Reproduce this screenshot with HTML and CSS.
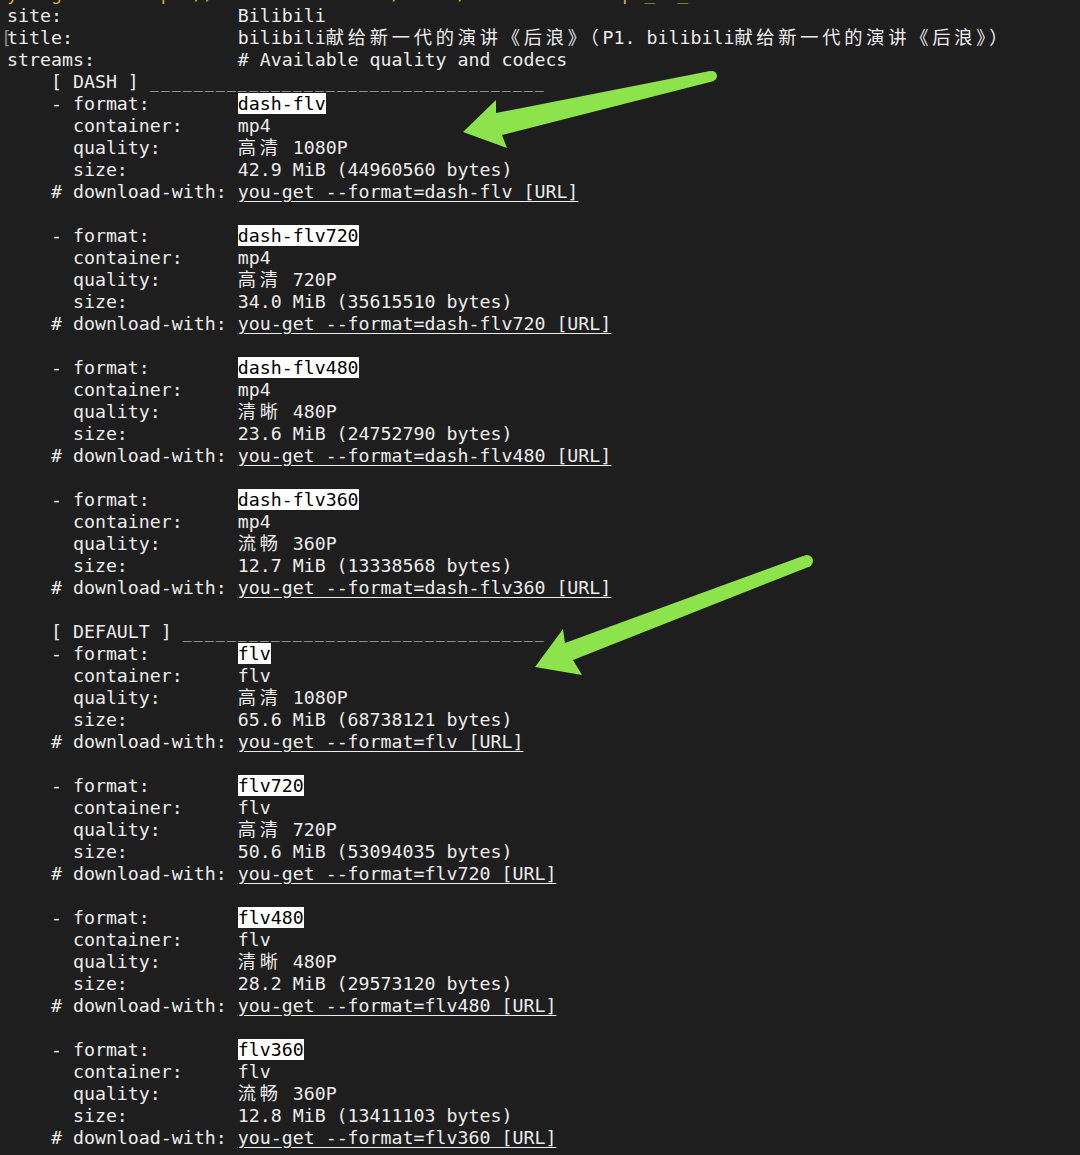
FILE: index.html
```html
<!DOCTYPE html>
<html lang="zh">
<head>
<meta charset="utf-8">
<title>you-get -i</title>
<link rel="stylesheet" href="styles.css">
</head>
<body>
<div class="term">
<div class="ln cmd">you-get -i https://www.bilibili.com/video/BV1FV411d7u7?spm_id_from=333.999.0.0</div>
<div class="ln">site:                Bilibili</div>
<div class="ln"><span class="mark">[</span>title:               bilibili<span class="w">献给新一代的演讲《后浪》（</span>P1. bilibili<span class="w">献给新一代的演讲《后浪》）</span></div>
<div class="ln">streams:             # Available quality and codecs</div>
<div class="ln">    [ DASH ] <span class="us">____________________________________</span></div>
<div class="ln">    - format:        <span class="hl">dash-flv</span></div>
<div class="ln">      container:     mp4</div>
<div class="ln">      quality:       <span class="w">高清</span> 1080P</div>
<div class="ln">      size:          42.9 MiB (44960560 bytes)</div>
<div class="ln">    # download-with: <span class="u">you-get --format=dash-flv [URL]</span></div>
<div class="ln"> </div>
<div class="ln">    - format:        <span class="hl">dash-flv720</span></div>
<div class="ln">      container:     mp4</div>
<div class="ln">      quality:       <span class="w">高清</span> 720P</div>
<div class="ln">      size:          34.0 MiB (35615510 bytes)</div>
<div class="ln">    # download-with: <span class="u">you-get --format=dash-flv720 [URL]</span></div>
<div class="ln"> </div>
<div class="ln">    - format:        <span class="hl">dash-flv480</span></div>
<div class="ln">      container:     mp4</div>
<div class="ln">      quality:       <span class="w">清晰</span> 480P</div>
<div class="ln">      size:          23.6 MiB (24752790 bytes)</div>
<div class="ln">    # download-with: <span class="u">you-get --format=dash-flv480 [URL]</span></div>
<div class="ln"> </div>
<div class="ln">    - format:        <span class="hl">dash-flv360</span></div>
<div class="ln">      container:     mp4</div>
<div class="ln">      quality:       <span class="w">流畅</span> 360P</div>
<div class="ln">      size:          12.7 MiB (13338568 bytes)</div>
<div class="ln">    # download-with: <span class="u">you-get --format=dash-flv360 [URL]</span></div>
<div class="ln"> </div>
<div class="ln">    [ DEFAULT ] <span class="us">_________________________________</span></div>
<div class="ln">    - format:        <span class="hl">flv</span></div>
<div class="ln">      container:     flv</div>
<div class="ln">      quality:       <span class="w">高清</span> 1080P</div>
<div class="ln">      size:          65.6 MiB (68738121 bytes)</div>
<div class="ln">    # download-with: <span class="u">you-get --format=flv [URL]</span></div>
<div class="ln"> </div>
<div class="ln">    - format:        <span class="hl">flv720</span></div>
<div class="ln">      container:     flv</div>
<div class="ln">      quality:       <span class="w">高清</span> 720P</div>
<div class="ln">      size:          50.6 MiB (53094035 bytes)</div>
<div class="ln">    # download-with: <span class="u">you-get --format=flv720 [URL]</span></div>
<div class="ln"> </div>
<div class="ln">    - format:        <span class="hl">flv480</span></div>
<div class="ln">      container:     flv</div>
<div class="ln">      quality:       <span class="w">清晰</span> 480P</div>
<div class="ln">      size:          28.2 MiB (29573120 bytes)</div>
<div class="ln">    # download-with: <span class="u">you-get --format=flv480 [URL]</span></div>
<div class="ln"> </div>
<div class="ln">    - format:        <span class="hl">flv360</span></div>
<div class="ln">      container:     flv</div>
<div class="ln">      quality:       <span class="w">流畅</span> 360P</div>
<div class="ln">      size:          12.8 MiB (13411103 bytes)</div>
<div class="ln">    # download-with: <span class="u">you-get --format=flv360 [URL]</span></div>
</div>
<svg class="arrows" width="1080" height="1155" viewBox="0 0 1080 1155" xmlns="http://www.w3.org/2000/svg">
  <g fill="#8de34b">
    <polygon points="710,71 496,113 496,100 463,132 507,148 502,135 714,81"/>
    <circle cx="712" cy="76" r="5"/>
    <polygon points="803,556 565,643 563,629 535,667 582,675 573,660 811,566"/>
    <circle cx="807" cy="561" r="6"/>
  </g>
</svg>
</body>
</html>
```
FILE: styles.css
```css
html, body {
  margin: 0;
  padding: 0;
}
body {
  background: #1e1e1e;
  width: 1080px;
  height: 1155px;
  overflow: hidden;
  position: relative;
}
.term {
  margin-top: -17px;
  padding-left: 7px;
  font-family: "DejaVu Sans Mono", "Noto Sans CJK SC", monospace;
  font-size: 18.25px;
  line-height: 22px;
  color: #ececec;
}
.ln {
  white-space: pre;
  height: 22px;
  position: relative;
}
.cmd {
  color: #c8b62c;
}
.mark {
  position: absolute;
  left: -6px;
  top: 0;
  color: #8a8a8a;
}
.w {
  font-family: "Noto Sans CJK SC", sans-serif;
  letter-spacing: 3.75px;
  line-height: 0;
}
.us {
  font-size: 15px;
  letter-spacing: 1.97px;
  line-height: 0;
  color: #dcdcdc;
}
.hl {
  background: #ffffff;
  color: #000000;
}
.u {
  text-decoration: underline;
  text-underline-offset: 3px;
}
.arrows {
  position: absolute;
  left: 0;
  top: 0;
}
```
